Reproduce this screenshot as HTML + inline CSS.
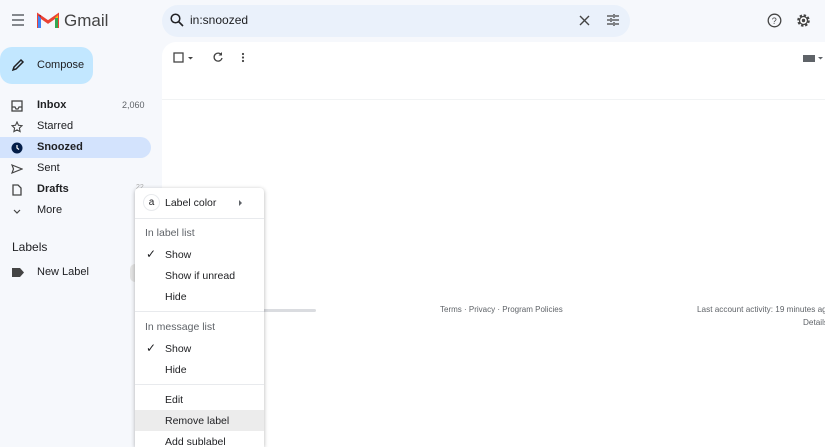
<!DOCTYPE html>
<html style="width:825px;height:447px;overflow:hidden"><head><style>
*{margin:0;padding:0;box-sizing:border-box}
body{width:825px;height:447px;overflow:hidden;background:#f6f8fc;font-family:"Liberation Sans",Arial,sans-serif;color:#202124;position:relative;font-size:11px}
.a{position:absolute}
.nav{position:absolute;left:0;width:151px;height:21px;border-radius:0 11px 11px 0}
.nav span{position:absolute;left:37px;top:4px;font-size:11px}
.nav svg{position:absolute;left:11px;top:5px}
.menu{position:absolute;left:135px;top:188px;width:129px;height:259px;background:#fff;box-shadow:0 1px 4px rgba(0,0,0,.3);border-radius:4px 4px 0 0;overflow:hidden}
.mi{position:absolute;left:30px;font-size:10.5px;color:#202124}
.hd{position:absolute;left:10px;font-size:10.5px;color:#5f6368}
.sep{position:absolute;left:0;width:129px;height:1px;background:#e8eaed}
</style></head><body>
<svg class="a" style="left:11px;top:14px" width="14" height="12"><path d="M1 1h12M1 6h12M1 11h12" stroke="#5f6368" stroke-width="1.5"/></svg>
<svg class="a" style="left:37px;top:12px" width="22" height="17" viewBox="0 0 22 17"><path d="M1 16V3l10 7 10-7v13" fill="none" stroke="#ea4335" stroke-width="3"/><path d="M1 3v13h3V6z" fill="#4285f4"/><path d="M21 3v13h-3V6z" fill="#34a853"/><path d="M18 6l3-3v3z" fill="#fbbc04"/><path d="M1 3l3 3V3z" fill="#c5221f"/></svg>
<div class="a" style="left:64px;top:11px;font-size:17px;color:#444">Gmail</div>
<div class="a" style="left:162px;top:5px;width:468px;height:32px;background:#eaf1fb;border-radius:16px"></div>
<svg class="a" style="left:170px;top:13px" width="14" height="14"><circle cx="5.5" cy="5.5" r="4.3" fill="none" stroke="#202124" stroke-width="1.5"/><path d="M8.5 8.5l4.5 4.5" stroke="#202124" stroke-width="1.6"/></svg>
<div class="a" style="left:190px;top:13px;font-size:12px">in:snoozed</div>
<svg class="a" style="left:579px;top:15px" width="11" height="11"><path d="M1 1l9 9M10 1l-9 9" stroke="#444" stroke-width="1.4"/></svg>
<svg class="a" style="left:606px;top:14px" width="14" height="12"><path d="M1 2h6M9 2h4M1 6h3M6 6h7M1 10h6M9 10h4M8 0v4M5 4v4M8 8v4" stroke="#444" stroke-width="1.3"/></svg>
<svg class="a" style="left:767px;top:13px" width="15" height="15"><circle cx="7.5" cy="7.5" r="6.3" fill="none" stroke="#444" stroke-width="1.3"/><text x="4.8" y="11" font-size="9" fill="#444" font-family="Liberation Sans">?</text></svg>
<svg class="a" style="left:796px;top:13px" width="15" height="15" viewBox="0 0 15 15"><circle cx="7.5" cy="7.5" r="4.8" fill="none" stroke="#444" stroke-width="3" stroke-dasharray="2.2 1.57"/><circle cx="7.5" cy="7.5" r="4" fill="#fff" stroke="#444" stroke-width="1.3"/><circle cx="7.5" cy="7.5" r="1.7" fill="#444"/></svg>
<div class="a" style="left:0;top:47px;width:93px;height:37px;background:#c2e7ff;border-radius:12px"></div>
<svg class="a" style="left:11px;top:58px" width="14" height="14"><path d="M2 12l1-3 7-7 2 2-7 7z" fill="none" stroke="#202124" stroke-width="1.5"/></svg>
<div class="a" style="left:37px;top:59px;font-size:11px">Compose</div>
<div class="nav" style="top:95px"><svg width="12" height="12"><rect x="1" y="1" width="10" height="10" fill="none" stroke="#444" stroke-width="1.3"/><path d="M1 7h3l1 2h2l1-2h3" fill="none" stroke="#444" stroke-width="1.2"/></svg><span style="font-weight:bold">Inbox</span><span style="left:122px;font-size:9px;color:#5f6368;top:5px">2,060</span></div>
<div class="nav" style="top:116px"><svg width="12" height="12"><path d="M6 1l1.5 3.3 3.5.4-2.6 2.4.7 3.5L6 8.9 2.9 10.6l.7-3.5L1 4.7l3.5-.4z" fill="none" stroke="#444" stroke-width="1.1"/></svg><span>Starred</span></div>
<div class="nav" style="top:137px;background:#d3e3fd"><svg width="12" height="12"><circle cx="6" cy="6" r="5.5" fill="#041e49"/><path d="M6 3v3l2 1.5" stroke="#fff" stroke-width="1.2" fill="none"/></svg><span style="font-weight:bold">Snoozed</span></div>
<div class="nav" style="top:158px"><svg width="12" height="12"><path d="M1 2l10 4-10 4 1.5-4z" fill="none" stroke="#444" stroke-width="1.2"/></svg><span>Sent</span></div>
<div class="nav" style="top:179px"><svg width="12" height="12"><path d="M2 1h5l3 3v7H2z" fill="none" stroke="#444" stroke-width="1.3"/></svg><span style="font-weight:bold">Drafts</span></div>
<div class="nav" style="top:200px"><svg width="12" height="12"><path d="M3 5l3 3 3-3" fill="none" stroke="#444" stroke-width="1.2"/></svg><span>More</span></div>
<div class="a" style="left:12px;top:240px;font-size:12px">Labels</div>
<svg class="a" style="left:12px;top:268px" width="12" height="9"><path d="M0 0h8l4 4.5-4 4.5H0z" fill="#444"/></svg>
<div class="a" style="left:37px;top:266px;font-size:11px">New Label</div>
<div class="a" style="left:130px;top:264px;width:10px;height:18px;background:#e3e3e3;border-radius:9px"></div>
<div class="a" style="left:162px;top:42px;width:663px;height:405px;background:#fff;border-radius:14px 0 0 0"></div>
<div class="a" style="left:162px;top:99px;width:663px;height:1px;background:#f1f3f4"></div>
<svg class="a" style="left:173px;top:52px" width="24" height="12"><rect x="1" y="1" width="9" height="9" fill="none" stroke="#444" stroke-width="1.3"/><path d="M15 5h5l-2.5 2.5z" fill="#444"/></svg>
<svg class="a" style="left:212px;top:51px" width="12" height="12"><path d="M9.5 4A4 4 0 1 0 10 7" fill="none" stroke="#444" stroke-width="1.3"/><path d="M10 1v3.5H6.5z" fill="#444"/></svg>
<svg class="a" style="left:241px;top:52px" width="4" height="11"><circle cx="2" cy="2" r="1.1" fill="#444"/><circle cx="2" cy="5.5" r="1.1" fill="#444"/><circle cx="2" cy="9" r="1.1" fill="#444"/></svg>
<svg class="a" style="left:803px;top:54px" width="22" height="9"><rect x="0" y="1" width="12" height="7" fill="#5f6368"/><path d="M15 3h5l-2.5 2.5z" fill="#5f6368"/></svg>
<div class="a" style="left:262px;top:309px;width:54px;height:3px;background:#dadce0;border-radius:2px"></div>
<div class="a" style="left:440px;top:305px;font-size:8px;color:#5f6368;white-space:nowrap">Terms · Privacy · Program Policies</div>
<div class="a" style="left:697px;top:305px;font-size:8.2px;color:#5f6368;white-space:nowrap">Last account activity: 19 minutes ago</div>
<div class="a" style="left:803px;top:318px;font-size:8.2px;color:#5f6368">Details</div>
<div class="a" style="left:136px;top:184px;font-size:7px;color:#aaa">22</div>
<div class="menu">
<div class="a" style="left:8px;top:6px;width:17px;height:17px;border:1px solid #e8eaed;border-radius:50%;font-size:10px;text-align:center;line-height:15px">a</div>
<div class="mi" style="top:9px">Label color</div>
<svg class="a" style="left:104px;top:12px" width="4" height="6"><path d="M0 0l3 3-3 3z" fill="#5f6368"/></svg>
<div class="sep" style="top:30px"></div>
<div class="hd" style="top:39px">In label list</div>
<div class="a" style="left:11px;top:59px;font-size:12px">✓</div><div class="mi" style="top:61px">Show</div>
<div class="mi" style="top:82px">Show if unread</div>
<div class="mi" style="top:103px">Hide</div>
<div class="sep" style="top:123px"></div>
<div class="hd" style="top:133px">In message list</div>
<div class="a" style="left:11px;top:153px;font-size:12px">✓</div><div class="mi" style="top:155px">Show</div>
<div class="mi" style="top:176px">Hide</div>
<div class="sep" style="top:196px"></div>
<div class="mi" style="top:206px">Edit</div>
<div class="a" style="left:0;top:222px;width:129px;height:21px;background:#ececec"></div>
<div class="mi" style="top:227px">Remove label</div>
<div class="mi" style="top:248px">Add sublabel</div>
</div>
</body></html>
